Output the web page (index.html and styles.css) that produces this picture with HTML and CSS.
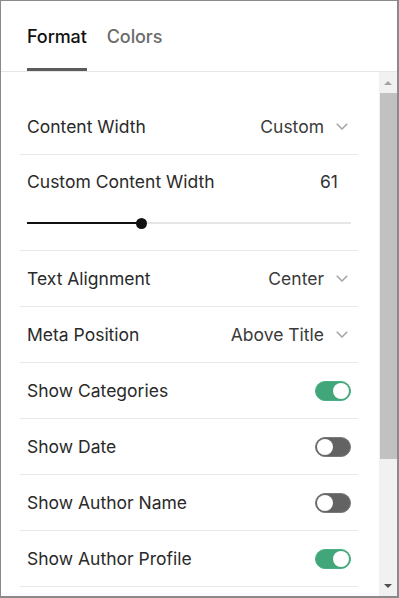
FILE: index.html
```html
<!DOCTYPE html>
<html>
<head>
<meta charset="utf-8">
<link rel="stylesheet" href="styles.css">
</head>
<body>
<div class="frame">
  <div class="tabs">
    <div class="tab active">Format</div>
    <div class="tab">Colors</div>
  </div>
  <div class="panel">
    <div class="list">
      <div class="row">
        <span class="label">Content Width</span>
        <span class="select"><span class="value">Custom</span><svg class="chev" width="12" height="7" viewBox="0 0 12 7"><polyline points="0.8,0.8 6,6 11.2,0.8"/></svg></span>
      </div>
      <div class="row slider-row">
        <div class="slider-head">
          <span class="label">Custom Content Width</span>
          <span class="num">61</span>
        </div>
        <div class="slider">
          <div class="fill" style="width:35.2%"></div>
          <div class="knob" style="left:35.2%"></div>
        </div>
      </div>
      <div class="row">
        <span class="label">Text Alignment</span>
        <span class="select"><span class="value">Center</span><svg class="chev" width="12" height="7" viewBox="0 0 12 7"><polyline points="0.8,0.8 6,6 11.2,0.8"/></svg></span>
      </div>
      <div class="row">
        <span class="label">Meta Position</span>
        <span class="select"><span class="value">Above Title</span><svg class="chev" width="12" height="7" viewBox="0 0 12 7"><polyline points="0.8,0.8 6,6 11.2,0.8"/></svg></span>
      </div>
      <div class="row">
        <span class="label">Show Categories</span>
        <span class="toggle on"><span class="dot"></span></span>
      </div>
      <div class="row">
        <span class="label">Show Date</span>
        <span class="toggle"><span class="dot"></span></span>
      </div>
      <div class="row">
        <span class="label">Show Author Name</span>
        <span class="toggle"><span class="dot"></span></span>
      </div>
      <div class="row">
        <span class="label">Show Author Profile</span>
        <span class="toggle on"><span class="dot"></span></span>
      </div>
    </div>
    <div class="scrollbar">
      <div class="sb-btn"><span class="tri up"></span></div>
      <div class="sb-track">
        <div class="sb-thumb"></div>
      </div>
      <div class="sb-btn"><span class="tri down"></span></div>
    </div>
  </div>
</div>
</body>
</html>
```
FILE: styles.css
```css
html, body {
  margin: 0;
  padding: 0;
  background: #ffffff;
}
.frame {
  width: 399px;
  height: 598px;
  box-sizing: border-box;
  border: 1px solid #8a8a8a;
  border-right-width: 2px;
  border-bottom-width: 2px;
  display: flex;
  flex-direction: column;
  font-family: Inter, "Liberation Sans", sans-serif;
  color: #222222;
  background: #ffffff;
}
.tabs {
  flex: none;
  height: 71px;
  box-sizing: border-box;
  border-bottom: 1px solid #e6e6e6;
  display: flex;
  gap: 20px;
  padding-left: 26px;
}
.tab {
  box-sizing: border-box;
  height: 70px;
  padding-top: 4px;
  display: flex;
  align-items: center;
  font-size: 18px;
  font-weight: 500;
  color: #6b6b6b;
  border-bottom: 3px solid transparent;
  letter-spacing: -0.1px;
}
.tab.active {
  color: #111111;
  border-bottom-color: #5c5c5c;
}
.panel {
  flex: 1;
  min-height: 0;
  display: flex;
}
.list {
  flex: 1;
  overflow: hidden;
  padding: 27px 21px 0 19px;
}
.row {
  box-sizing: border-box;
  height: 56px;
  padding: 0 7px;
  border-bottom: 1px solid #e8e8e8;
  display: flex;
  align-items: center;
  justify-content: space-between;
  font-size: 17.5px;
  font-weight: 400;
}
.label {
  color: #2a2a2a;
}
.select {
  display: flex;
  align-items: center;
  gap: 12px;
  margin-right: 3px;
  color: #3a3a3a;
}
.chev {
  fill: none;
  stroke: #a3a3a3;
  stroke-width: 1.5;
}
.slider-row {
  height: 96px;
  flex-direction: column;
  align-items: stretch;
  justify-content: flex-start;
  padding-top: 17px;
}
.slider-head {
  display: flex;
  justify-content: space-between;
  line-height: 20px;
}
.num {
  margin-right: 13px;
  color: #333333;
}
.slider {
  position: relative;
  margin-top: 30px;
  height: 2px;
  background: #e6e6e6;
}
.fill {
  height: 2px;
  background: #111111;
}
.knob {
  position: absolute;
  top: 50%;
  width: 11px;
  height: 11px;
  margin: -5.5px 0 0 -5.5px;
  border-radius: 50%;
  background: #111111;
}
.toggle {
  box-sizing: border-box;
  width: 36px;
  height: 20px;
  border-radius: 10px;
  background: #636363;
  border: 1px solid #7a7a7a;
  display: flex;
  align-items: center;
  padding: 0 1px;
}
.toggle .dot {
  width: 16px;
  height: 16px;
  border-radius: 50%;
  background: #ffffff;
}
.toggle.on {
  background: #42a67b;
  border-color: #4cae84;
  justify-content: flex-end;
}
.scrollbar {
  flex: none;
  width: 18px;
  background: #f1f1f1;
  display: flex;
  flex-direction: column;
}
.sb-btn {
  flex: none;
  height: 21px;
  display: flex;
  align-items: center;
  justify-content: center;
}
.sb-track {
  flex: 1;
  display: flex;
  flex-direction: column;
}
.sb-thumb {
  height: 366px;
  margin-left: 1px;
  background: #c1c1c1;
}
.tri {
  width: 0;
  height: 0;
  border-left: 4px solid transparent;
  border-right: 4px solid transparent;
}
.tri.up {
  border-bottom: 4px solid #a3a3a3;
}
.tri.down {
  border-top: 4px solid #505050;
}
```
